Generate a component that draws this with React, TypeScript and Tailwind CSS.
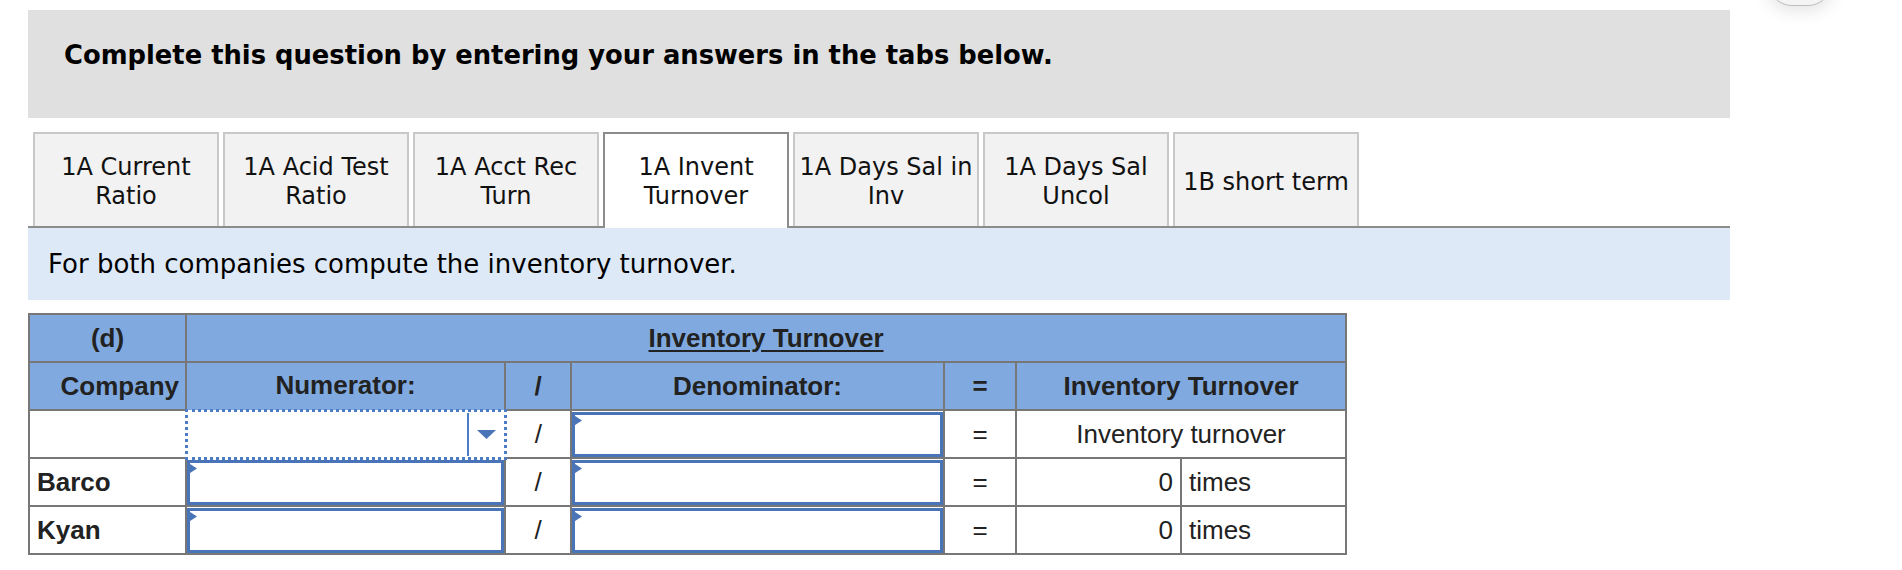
import React from "react";

const tabs = [
  ["1A Current", "Ratio"],
  ["1A Acid Test", "Ratio"],
  ["1A Acct Rec", "Turn"],
  ["1A Invent", "Turnover"],
  ["1A Days Sal in", "Inv"],
  ["1A Days Sal", "Uncol"],
  ["1B short term"],
];

function Marker() {
  return (
    <svg
      className="absolute -left-[3px] -top-[1px]"
      width="10"
      height="13"
      viewBox="0 0 10 13"
    >
      <polygon points="0,0 10,6.5 0,13" fill="#4a74b8" />
    </svg>
  );
}

function InputCell() {
  return (
    <td className="p-0 border-2 border-[#777777]">
      <div className="relative h-[45px] border-[3px] border-[#4a74b8] bg-white">
        <Marker />
      </div>
    </td>
  );
}

function DropdownCell() {
  return (
    <td className="p-0 border-[3px] border-dotted border-[#4d7cc6]">
      <div className="flex h-[43px]">
        <div className="flex-1" />
        <div className="w-[37px] border-l-2 border-[#4d7cc6] flex items-center justify-center">
          <svg width="19" height="9" viewBox="0 0 19 9">
            <polygon points="0,0 19,0 9.5,9" fill="#4a74b8" />
          </svg>
        </div>
      </div>
    </td>
  );
}

export default function App() {
  const cell = "border-2 border-[#777777] h-[48px]";
  const head = "border-2 border-[#777777] h-[48px] bg-[#80aadf] font-bold";

  return (
    <div className="relative w-[1902px] h-[570px] overflow-hidden bg-white">
      {/* floating pill, mostly off screen */}
      <div className="absolute left-[1768px] -top-[42px] w-[64px] h-[48px] rounded-full bg-[#f4f4f4] border border-[#bdbdbd] shadow-[0_4px_18px_rgba(0,0,0,0.12)]" />

      <div className="ml-[28px] pt-[10px] w-[1702px]">
        {/* instructions */}
        <div className="h-[108px] bg-[#e0e0e0] pl-[36px] pt-[31px]">
          <p className="font-['DejaVu_Sans',Verdana,sans-serif] font-bold text-[25.8px] leading-[28px] text-black">
            Complete this question by entering your answers in the tabs below.
          </p>
        </div>

        {/* tabs */}
        <div className="mt-[14px] flex items-start pl-[5px] border-b-2 border-[#8c8c8c] font-['DejaVu_Sans',Verdana,sans-serif] text-[24px] leading-[29px] text-[#111]">
          {tabs.map((t, i) => {
            const active = i === 3;
            return (
              <div
                key={i}
                className={
                  active
                    ? "relative z-10 w-[186px] h-[96px] -mb-[2px] mr-[4px] border-2 border-b-0 border-[#8c8c8c] bg-white flex flex-col items-center justify-center pt-[2px]"
                    : "w-[186px] h-[94px] mr-[4px] border-2 border-b-0 border-[#c8c8c8] bg-[#f2f2f2] flex flex-col items-center justify-center pt-[4px]"
                }
              >
                {t.map((line) => (
                  <span key={line}>{line}</span>
                ))}
              </div>
            );
          })}
        </div>

        {/* prompt */}
        <div className="h-[72px] bg-[#dde9f6] flex items-center pl-[20px] font-['DejaVu_Sans',Verdana,sans-serif] text-[26px] text-black">
          For both companies compute the inventory turnover.
        </div>

        {/* table */}
        <table className="mt-[13px] table-fixed border-collapse w-[1317px] font-['Liberation_Sans',Arial,sans-serif] text-[26px] text-[#222]">
          <colgroup>
            <col className="w-[157px]" />
            <col className="w-[319px]" />
            <col className="w-[66px]" />
            <col className="w-[373px]" />
            <col className="w-[72px]" />
            <col className="w-[165px]" />
            <col className="w-[165px]" />
          </colgroup>
          <tbody>
            <tr>
              <td className={`${head} text-center`}>(d)</td>
              <td colSpan={6} className={`${head} text-center`}>
                <span className="underline underline-offset-[3px]">Inventory Turnover</span>
              </td>
            </tr>
            <tr>
              <td className={`${head} text-right pr-[6px]`}>Company</td>
              <td className={`${head} text-center`}>Numerator:</td>
              <td className={`${head} text-center`}>/</td>
              <td className={`${head} text-center`}>Denominator:</td>
              <td className={`${head} text-center`}>=</td>
              <td colSpan={2} className={`${head} text-center`}>
                Inventory Turnover
              </td>
            </tr>
            <tr>
              <td className={cell}></td>
              <DropdownCell />
              <td className={`${cell} text-center`}>/</td>
              <InputCell />
              <td className={`${cell} text-center`}>=</td>
              <td colSpan={2} className={`${cell} text-center`}>
                Inventory turnover
              </td>
            </tr>
            {["Barco", "Kyan"].map((name) => (
              <tr key={name}>
                <td className={`${cell} font-bold pl-[7px]`}>{name}</td>
                <InputCell />
                <td className={`${cell} text-center`}>/</td>
                <InputCell />
                <td className={`${cell} text-center`}>=</td>
                <td className={`${cell} text-right pr-[7px]`}>0</td>
                <td className={`${cell} pl-[7px]`}>times</td>
              </tr>
            ))}
          </tbody>
        </table>
      </div>
    </div>
  );
}
